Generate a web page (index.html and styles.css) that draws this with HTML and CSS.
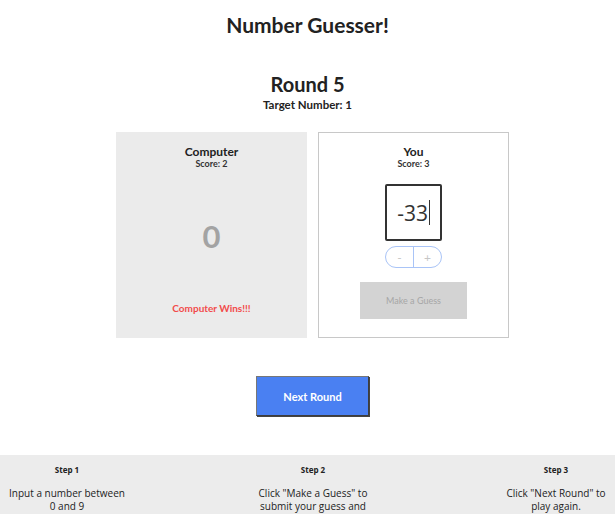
FILE: index.html
```html
<!DOCTYPE html>
<html>
<head>
<meta charset="utf-8">
<link rel="stylesheet" href="styles.css">
</head>
<body>
<h1 class="title">Number Guesser!</h1>
<section class="round">
  <h2 class="round-title">Round 5</h2>
  <p class="target">Target Number: 1</p>
</section>
<section class="cards">
  <div class="card card-computer">
    <h3 class="player">Computer</h3>
    <p class="score">Score: 2</p>
    <div class="guess-num">0</div>
    <p class="result">Computer Wins!!!</p>
  </div>
  <div class="card card-you">
    <h3 class="player">You</h3>
    <p class="score">Score: 3</p>
    <div class="input-box"><span class="input-val">-33</span><span class="caret"></span></div>
    <div class="stepper">
      <span class="step-btn">-</span>
      <span class="step-btn">+</span>
    </div>
    <div class="guess-btn">Make a Guess</div>
  </div>
</section>
<div class="next-wrap">
  <div class="next-btn">Next Round</div>
</div>
<footer class="steps">
  <div class="step">
    <h4 class="step-title">Step 1</h4>
    <p class="step-text">Input a number between 0 and 9</p>
  </div>
  <div class="step">
    <h4 class="step-title">Step 2</h4>
    <p class="step-text">Click "Make a Guess" to submit your guess and</p>
  </div>
  <div class="step">
    <h4 class="step-title">Step 3</h4>
    <p class="step-text">Click "Next Round" to play again.</p>
  </div>
</footer>
</body>
</html>
```

FILE: styles.css
```css
* { box-sizing: border-box; }
html, body { margin: 0; padding: 0; }
body {
  font-family: "Lato", "Noto Sans", sans-serif;
  color: #222;
  background: #fff;
  overflow: hidden;
}
.title {
  margin: 0;
  padding-top: 12px;
  text-align: center;
  font-size: 21px;
  font-weight: 700;
  line-height: 26px;
}
.round {
  margin-top: 34px;
  text-align: center;
}
.round-title {
  margin: 0;
  font-size: 20px;
  font-weight: 700;
  line-height: 24px;
}
.target {
  margin: 1px 0 0;
  font-size: 11.5px;
  font-weight: 700;
  line-height: 16px;
}
.cards {
  display: flex;
  justify-content: center;
  gap: 11px;
  margin-top: 19px;
  padding-left: 10px;
}
.card {
  width: 191px;
  height: 206px;
  display: flex;
  flex-direction: column;
  align-items: center;
  padding-top: 12px;
}
.card-computer { background: #ebebeb; }
.card-you { border: 1px solid #c8c8c8; padding-top: 11px; }
.player {
  margin: 0;
  font-size: 12px;
  font-weight: 700;
  line-height: 15px;
}
.score {
  margin: 0;
  font-size: 9px;
  font-weight: 700;
  line-height: 10px;
  color: #333;
}
.guess-num {
  margin-top: 49px;
  font-size: 31px;
  font-weight: 700;
  color: #a3a3a3;
  line-height: 36px;
}
.result {
  margin: 48px 0 0;
  font-size: 10px;
  font-weight: 700;
  color: #f24b4b;
}
.input-box {
  margin-top: 15px;
  width: 57px;
  height: 57px;
  border: 2px solid #333;
  border-radius: 2px;
  display: flex;
  align-items: center;
  justify-content: flex-end;
  padding-right: 10px;
  font-family: "Open Sans", "Noto Sans", sans-serif;
  font-size: 21px;
  color: #333;
}
.caret {
  display: inline-block;
  width: 1px;
  height: 25px;
  background: #333;
  margin-left: 1px;
}
.stepper {
  margin-top: 5px;
  width: 57px;
  height: 22px;
  border: 1.5px solid #a9c4f7;
  border-radius: 11px;
  display: flex;
}
.step-btn {
  flex: 1;
  display: flex;
  align-items: center;
  justify-content: center;
  color: #c6c6c6;
  font-size: 12px;
}
.step-btn + .step-btn { border-left: 1.5px solid #a9c4f7; }
.guess-btn {
  margin-top: 14px;
  width: 107px;
  height: 37px;
  background: #d3d3d3;
  color: #a6a6a6;
  font-size: 9px;
  display: flex;
  align-items: center;
  justify-content: center;
}
.next-wrap {
  display: flex;
  justify-content: center;
  margin-top: 38px;
  padding-left: 10px;
}
.next-btn {
  width: 113px;
  height: 40px;
  background: #4a80f2;
  color: #fff;
  font-size: 11px;
  font-weight: 700;
  display: flex;
  align-items: center;
  justify-content: center;
  border: 1px solid #3d3d3d;
  border-top-color: #777;
  border-left-color: #777;
  box-shadow: 1px 1px 0 #444;
}
.steps {
  margin-top: 39px;
  background: #ececec;
  height: 70px;
  display: flex;
  justify-content: space-between;
  padding: 0 0 0 5px;
  font-family: "Open Sans", "Noto Sans", sans-serif;
  color: #222;
}
.step {
  width: 124px;
  text-align: center;
}
.step:last-child { width: 118px; }
.step-title {
  margin: 9px 0 0;
  font-size: 8px;
  font-weight: 700;
  line-height: 12px;
}
.step-text {
  margin: 11px 0 0;
  font-size: 10px;
  line-height: 13px;
}
```
